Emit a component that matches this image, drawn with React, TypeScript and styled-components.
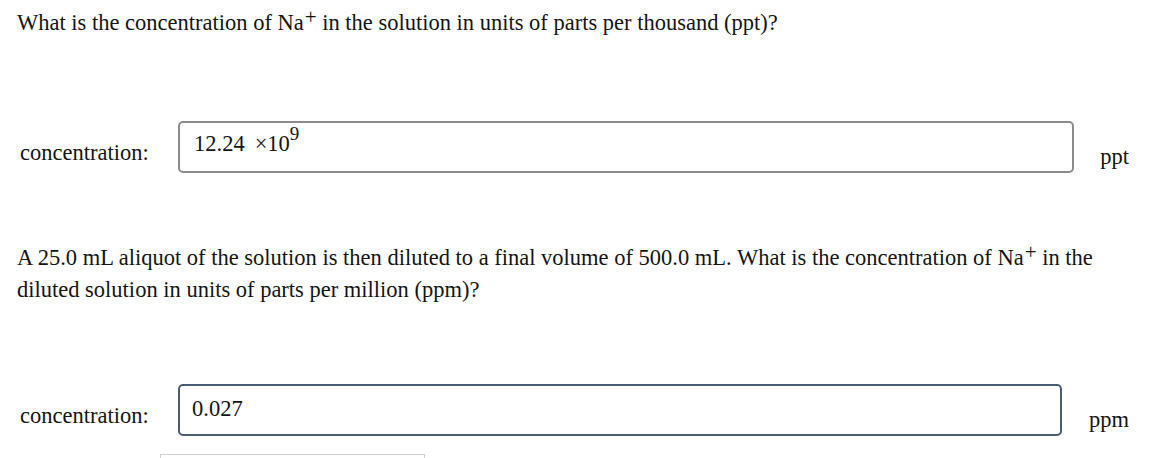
import React from "react";
import styled, { createGlobalStyle } from "styled-components";

const Global = createGlobalStyle`
  html, body {
    margin: 0;
    padding: 0;
    background: #ffffff;
  }
  body {
    font-family: "Liberation Serif", "Times New Roman", serif;
    color: #141414;
  }
`;

const Page = styled.div`
  box-sizing: border-box;
  height: 458px;
  overflow: hidden;
  padding: 7px 24px 0 17px;
  font-size: 22.5px;
`;

const Question = styled.p<{ $top: number }>`
  margin: ${(p) => p.$top}px 0 0 0;
  line-height: 32px;
  font-size: 22.5px;
`;

/* ionic charge, e.g. the "+" on Na */
const Charge = styled.sup`
  font-size: 21px;
  line-height: 0;
  vertical-align: 6px;
  margin-left: 1px;
`;

const AnswerRow = styled.div<{ $top: number }>`
  position: relative;
  display: flex;
  align-items: center;
  margin-top: ${(p) => p.$top}px;
  padding-left: 3px;
`;

const Label = styled.span`
  width: 158px;
  flex: none;
  font-size: 22.5px;
  padding-top: 11px;
`;

const Field = styled.div<{ $focused?: boolean; $indent: number }>`
  flex: 1;
  box-sizing: border-box;
  height: 52px;
  display: flex;
  align-items: center;
  padding-left: ${(p) => p.$indent}px;
  border: 2px solid ${(p) => (p.$focused ? "#4a5c72" : "#8c8c8c")};
  border-radius: 5px;
  font-size: 22.5px;
  background: #fff;
`;

const Unit = styled.span<{ $gap: number }>`
  flex: none;
  margin-left: ${(p) => p.$gap}px;
  font-size: 22.5px;
  padding-top: 20px;
`;

const Times = styled.span`
  margin-left: 10px;
`;

const Exponent = styled.sup`
  font-size: 19px;
  line-height: 0;
  vertical-align: 0.6em;
`;

const FieldText = styled.span<{ $lift: number }>`
  padding-bottom: ${(p) => p.$lift}px;
`;

const Popup = styled.div`
  position: absolute;
  left: 143px;
  top: 70px;
  width: 263px;
  height: 40px;
  border: 1px solid #cfcfcf;
  background: #fff;
`;

export default function App() {
  return (
    <>
      <Global />
      <Page>
        <Question $top={0}>
          What is the concentration of Na<Charge>+</Charge> in the solution in
          units of parts per thousand (ppt)?
        </Question>
        <AnswerRow $top={82}>
          <Label>concentration:</Label>
          <Field $indent={14}>
            <FieldText $lift={7}>
              12.24<Times>×10</Times>
              <Exponent>9</Exponent>
            </FieldText>
          </Field>
          <Unit $gap={26}>ppt</Unit>
        </AnswerRow>
        <Question $top={69}>
          A 25.0 mL aliquot of the solution is then diluted to a final volume of
          500.0 mL. What is the concentration of Na<Charge>+</Charge> in the
          diluted solution in units of parts per million (ppm)?
        </Question>
        <AnswerRow $top={78}>
          <Label>concentration:</Label>
          <Field $focused $indent={12}>
            <FieldText $lift={2}>0.027</FieldText>
          </Field>
          <Unit $gap={27}>ppm</Unit>
          <Popup />
        </AnswerRow>
      </Page>
    </>
  );
}
